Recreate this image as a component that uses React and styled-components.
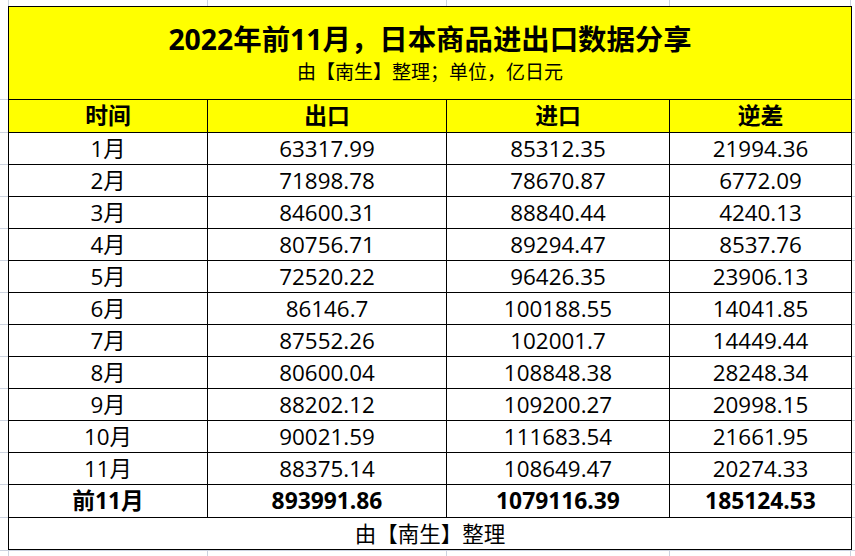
import React from 'react';
import styled, { createGlobalStyle } from 'styled-components';

const GlobalStyle = createGlobalStyle`
  html, body {
    margin: 0;
    padding: 0;
    background: #fff;
  }
  body {
    font-family: "Open Sans", "Noto Sans CJK SC", sans-serif;
    color: #000;
  }
`;

const GRID = '#ccd3e0';
const COL_LINES = [8, 207, 446, 669, 850];
const ROW_LINES = [99, 132, 164, 196, 228, 260, 292, 324, 356, 388, 420, 452, 484, 517, 550];

const gridLayers = () =>
  [
    ...COL_LINES.map(x => `linear-gradient(${GRID}, ${GRID}) ${x}px 0 / 1px 100% no-repeat`),
    ...ROW_LINES.map(y => `linear-gradient(${GRID}, ${GRID}) 0 ${y}px / 100% 1px no-repeat`),
  ].join(', ');

const Sheet = styled.div`
  width: 855px;
  height: 556px;
  box-sizing: border-box;
  padding: 6px 0 0 8px;
  overflow: hidden;
  background: ${gridLayers()};
`;

const Table = styled.table`
  border-collapse: collapse;
  table-layout: fixed;
  width: 843px;
  background: #fff;
`;

const Col = styled.col`
  width: ${p => p.$w}px;
`;

const Cell = styled.td`
  border: 1px solid #000;
  padding: 1px 0 0;
  text-align: center;
  vertical-align: middle;
  font-size: ${p => (p.$bold ? 22.8 : 22.4)}px;
  line-height: 1;
  font-weight: ${p => (p.$bold ? 700 : 400)};
  background: ${p => (p.$yellow ? '#ffff00' : 'transparent')};
`;

const Note = styled.span`
  font-size: 21.5px;
`;

const Row = styled.tr`
  height: ${p => p.$h || 32}px;
`;

const TitleBox = styled.div`
  display: flex;
  flex-direction: column;
  align-items: center;
  gap: 3px;
`;

const Title = styled.div`
  font-size: 28.4px;
  font-weight: 700;
  line-height: 35px;
`;

const Subtitle = styled.div`
  font-size: 19px;
  line-height: 25px;
`;

const months = [
  ['1月', '63317.99', '85312.35', '21994.36'],
  ['2月', '71898.78', '78670.87', '6772.09'],
  ['3月', '84600.31', '88840.44', '4240.13'],
  ['4月', '80756.71', '89294.47', '8537.76'],
  ['5月', '72520.22', '96426.35', '23906.13'],
  ['6月', '86146.7', '100188.55', '14041.85'],
  ['7月', '87552.26', '102001.7', '14449.44'],
  ['8月', '80600.04', '108848.38', '28248.34'],
  ['9月', '88202.12', '109200.27', '20998.15'],
  ['10月', '90021.59', '111683.54', '21661.95'],
  ['11月', '88375.14', '108649.47', '20274.33'],
];

const total = ['前11月', '893991.86', '1079116.39', '185124.53'];

export default function App() {
  return (
    <>
      <GlobalStyle />
      <Sheet>
        <Table>
          <colgroup>
            <Col $w={199} />
            <Col $w={239} />
            <Col $w={223} />
            <Col $w={182} />
          </colgroup>
          <tbody>
            <Row $h={93}>
              <Cell colSpan={4} $yellow>
                <TitleBox>
                  <Title>2022年前11月，日本商品进出口数据分享</Title>
                  <Subtitle>由【南生】整理；单位，亿日元</Subtitle>
                </TitleBox>
              </Cell>
            </Row>
            <Row $h={33}>
              {['时间', '出口', '进口', '逆差'].map(h => (
                <Cell key={h} $yellow $bold>{h}</Cell>
              ))}
            </Row>
            {months.map(r => (
              <Row key={r[0]}>
                {r.map((v, i) => (
                  <Cell key={i}>{v}</Cell>
                ))}
              </Row>
            ))}
            <Row $h={33}>
              {total.map((v, i) => (
                <Cell key={i} $bold>{v}</Cell>
              ))}
            </Row>
            <Row>
              <Cell colSpan={4}>
                <Note>由【南生】整理</Note>
              </Cell>
            </Row>
          </tbody>
        </Table>
      </Sheet>
    </>
  );
}
